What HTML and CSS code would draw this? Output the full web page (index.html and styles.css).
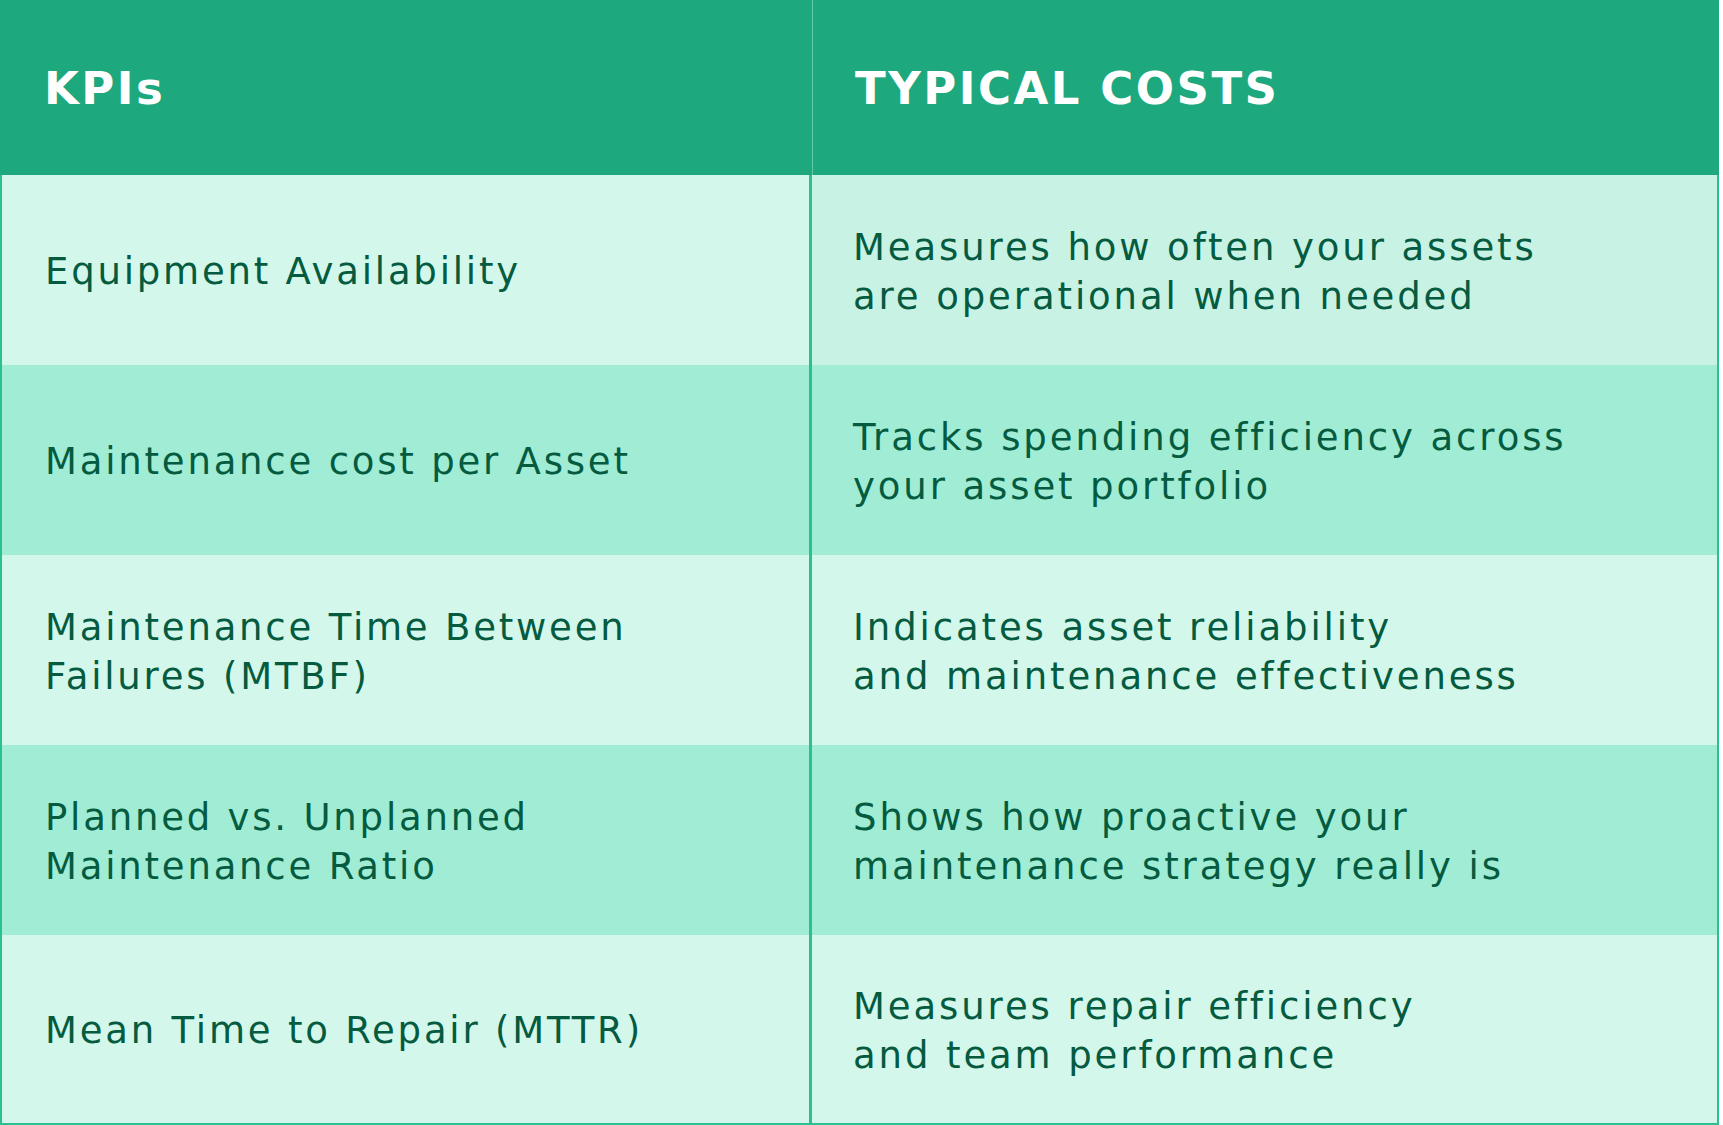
FILE: index.html
```html
<!DOCTYPE html>
<html lang="en">
<head>
<meta charset="utf-8">
<title>KPIs and Typical Costs</title>
<link rel="stylesheet" href="styles.css">
</head>
<body>
<div class="table">
  <div class="head">
    <div class="hcell hcell-first">KPIs</div>
    <div class="hcell">TYPICAL COSTS</div>
  </div>
  <div class="body">
    <div class="row row-light">
      <div class="cell cell-first">Equipment Availability</div>
      <div class="cell cell-second cell-tint">Measures how often your assets<br>are operational when needed</div>
    </div>
    <div class="row row-mid">
      <div class="cell cell-first">Maintenance cost per Asset</div>
      <div class="cell cell-second">Tracks spending efficiency across<br>your asset portfolio</div>
    </div>
    <div class="row row-light">
      <div class="cell cell-first">Maintenance Time Between<br>Failures (MTBF)</div>
      <div class="cell cell-second">Indicates asset reliability<br>and maintenance effectiveness</div>
    </div>
    <div class="row row-mid">
      <div class="cell cell-first">Planned vs. Unplanned<br>Maintenance Ratio</div>
      <div class="cell cell-second">Shows how proactive your<br>maintenance strategy really is</div>
    </div>
    <div class="row row-light row-last">
      <div class="cell cell-first">Mean Time to Repair (MTTR)</div>
      <div class="cell cell-second">Measures repair efficiency<br>and team performance</div>
    </div>
  </div>
</div>
</body>
</html>
```

FILE: styles.css
```css
* { box-sizing: border-box; }

html, body {
  margin: 0;
  padding: 0;
  background: #ffffff;
}

body {
  font-family: "DejaVu Sans", "Open Sans", sans-serif;
  width: 1723px;
  height: 1125px;
  overflow: hidden;
}

.table {
  width: 1719px;
  height: 1125px;
  display: flex;
  flex-direction: column;
}

.head {
  display: grid;
  grid-template-columns: 813px 1fr;
  height: 175px;
  background: #1ea87d;
}

.hcell {
  display: flex;
  align-items: center;
  padding-left: 42px;
  padding-top: 2px;
  color: #ffffff;
  font-weight: 700;
  font-size: 45px;
  letter-spacing: 2.5px;
}

.hcell-first {
  padding-left: 44px;
  border-right: 1px solid #63c9a7;
}

.body {
  flex: 1;
  display: flex;
  flex-direction: column;
  border: 2px solid #2cc091;
  border-top: 0;
}

.row {
  display: grid;
  grid-template-columns: 810px 1fr;
  height: 190px;
}

.row-last {
  flex: 1;
}

.row-light { background: #d3f7ea; }
.row-mid { background: #a0ecd4; }

.cell {
  display: flex;
  align-items: center;
  padding-top: 3px;
  color: #045b3f;
  font-size: 37px;
  line-height: 49px;
}

.cell-first {
  padding-left: 43px;
  border-right: 3px solid #2cc091;
  letter-spacing: 2.8px;
}

.cell-second {
  padding-left: 41px;
  letter-spacing: 2.9px;
}

.cell-tint {
  background: #c8f2e3;
}
```
